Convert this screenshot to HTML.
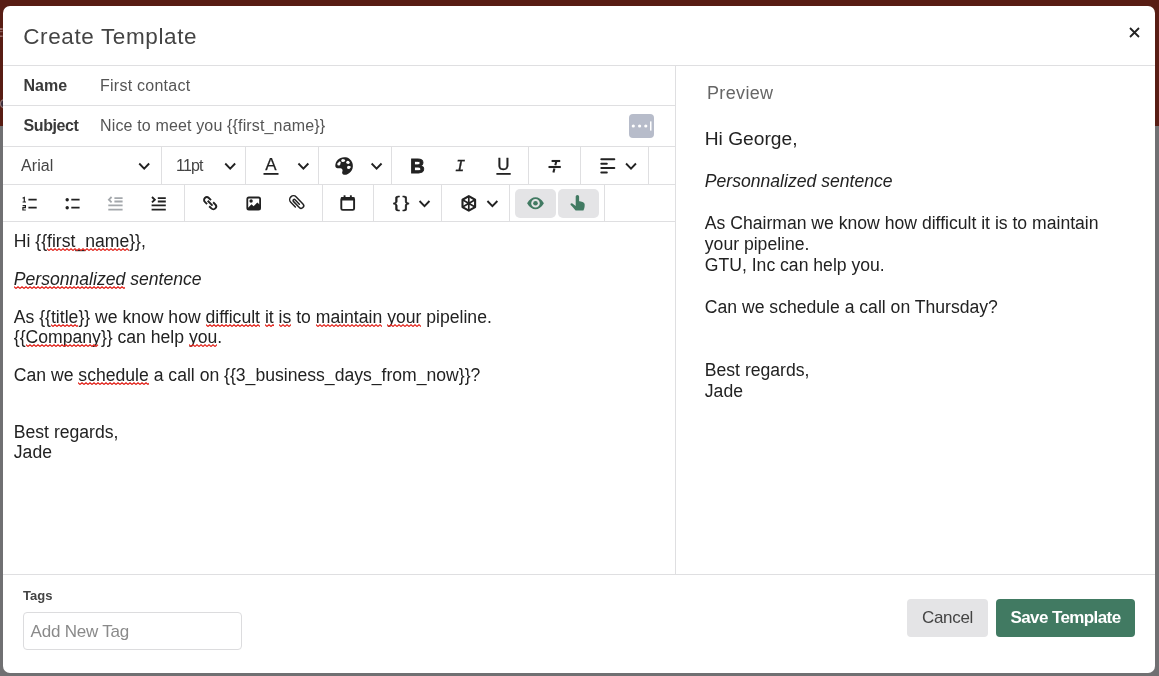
<!DOCTYPE html>
<html lang="en">
<head>
<meta charset="utf-8">
<title>Create Template</title>
<style>
*{box-sizing:border-box;margin:0;padding:0}
html,body{width:1159px;height:676px;overflow:hidden}
body{position:relative;background:#707072;font-family:"Liberation Sans",sans-serif;color:#444}
.bgtop{position:absolute;left:0;top:0;width:1159px;height:126px;background:#581d14}
.modal{will-change:transform;position:absolute;left:3px;top:6px;width:1152px;height:667px;background:#fff;border-radius:7px;overflow:hidden}
.abs{position:absolute;white-space:nowrap}
.hl{position:absolute;height:1px;background:#dfdfe1}
.vl{position:absolute;width:1px;background:#dfdfe1}
.title{left:20.2px;top:16.900px;font-size:22.5px;line-height:28px;color:#444;letter-spacing:0.62px}
.lbl{font-size:16px;font-weight:bold;color:#3a3a3a;line-height:20px}
.val{font-size:16px;color:#555;line-height:20px}
.ed{font-size:17.6px;line-height:20px;color:#222}
.ed i{font-style:italic}
.sp{position:relative;display:inline-block;line-height:inherit}
.sp svg{position:absolute;left:0;bottom:0.5px;width:100%;height:3px;overflow:hidden}
.pv{font-size:17.6px;line-height:21px;color:#222}
.tb{position:absolute;left:-3px;top:-6px;width:1159px;height:676px}
.tbt{font-size:16px;line-height:22px;color:#444}
.btn{position:absolute;height:37.5px;border-radius:4px;font-size:17px;line-height:37px;text-align:center}
</style>
</head>
<body>
<div class="bgtop"></div>
<svg style="position:absolute;left:0;top:0" width="4" height="130" viewBox="0 0 4 130"><rect x="0" y="28" width="2.6" height="2" fill="#9a6c69"/><rect x="0" y="31" width="2.6" height="1.2" fill="#8d5f5c"/><rect x="0" y="35.500" width="2.600" height="1.5" fill="#9a6c69"/><path d="M3.400,99.500 A4.500,4.500 0 0 0 3.400,108" fill="#3a2c3a" stroke="#8d7070" stroke-width="1.1"/></svg>
<div class="modal">
  <!-- header -->
  <div class="abs title">Create Template</div>
  <svg class="abs" style="left:1126px;top:21px" width="11" height="11" viewBox="0 0 11 11"><path d="M1 1 L10 10 M10 1 L1 10" stroke="#222" stroke-width="1.8" fill="none"/></svg>
  <div class="hl" style="left:0;top:59px;width:1152px"></div>

  <!-- left: name / subject -->
  <div class="abs lbl" style="left:20.5px;top:70px">Name</div>
  <div class="abs val" style="left:97px;top:70px;letter-spacing:0.25px">First contact</div>
  <div class="hl" style="left:0;top:99px;width:672px"></div>
  <div class="abs lbl" style="left:20.5px;top:110.3px;letter-spacing:-0.4px">Subject</div>
  <div class="abs val" style="left:97px;top:110px;letter-spacing:0.15px">Nice to meet you {{first_name}}</div>
  <div class="abs" style="left:626px;top:108px;width:25px;height:24px;border-radius:4px;background:#b7bcca"></div>
  <svg class="abs" style="left:626px;top:108px" width="25" height="24" viewBox="629 114 25 24"><circle cx="633.3" cy="126" r="1.6" fill="#fff"/><circle cx="639.6" cy="126" r="1.600" fill="#fff"/><circle cx="645.800" cy="126" r="1.6" fill="#fff"/><rect x="650" y="121.400" width="1.5" height="9.2" fill="#fff"/></svg>
  <div class="hl" style="left:0;top:140px;width:672px"></div>

  <!-- toolbar rows -->
  <div class="hl" style="left:0;top:178px;width:672px"></div>
  <div class="hl" style="left:0;top:215px;width:672px"></div>
  <div class="tb">
    <!-- row 1 dividers -->
    <div class="vl" style="left:161px;top:147px;height:37px"></div>
    <div class="vl" style="left:245px;top:147px;height:37px"></div>
    <div class="vl" style="left:318px;top:147px;height:37px"></div>
    <div class="vl" style="left:391px;top:147px;height:37px"></div>
    <div class="vl" style="left:528px;top:147px;height:37px"></div>
    <div class="vl" style="left:580px;top:147px;height:37px"></div>
    <div class="vl" style="left:648px;top:147px;height:37px"></div>
    <!-- row 2 dividers -->
    <div class="vl" style="left:184px;top:185px;height:36px"></div>
    <div class="vl" style="left:322px;top:185px;height:36px"></div>
    <div class="vl" style="left:373px;top:185px;height:36px"></div>
    <div class="vl" style="left:441px;top:185px;height:36px"></div>
    <div class="vl" style="left:509px;top:185px;height:36px"></div>
    <div class="vl" style="left:604px;top:185px;height:36px"></div>
    <!-- active buttons -->
    <div class="abs" style="left:515px;top:189px;width:41px;height:29px;border-radius:5px;background:#e4e4e6"></div>
    <div class="abs" style="left:558px;top:189px;width:41px;height:29px;border-radius:5px;background:#e4e4e6"></div>
    <!-- text items -->
    <div class="abs tbt" style="left:21px;top:154.500px;letter-spacing:0.1px">Arial</div>
    <div class="abs tbt" style="left:176px;top:154.5px;letter-spacing:-0.8px">11pt</div>
    <div class="abs" style="left:263.5px;top:154.400px;width:15px;text-align:center;font-size:17px;line-height:22px;color:#222;-webkit-text-stroke:0.25px #222">A</div>
    <div class="abs" style="left:407px;top:154.900px;width:21px;text-align:center;font-size:20px;line-height:22px;color:#222;font-weight:bold;-webkit-text-stroke:0.9px #222">B</div>
    <div class="abs" style="left:449.5px;top:156.2px;width:21px;text-align:center;font-family:'Liberation Mono',monospace;font-style:italic;font-size:17px;line-height:22px;color:#222;-webkit-text-stroke:0.3px #222">I</div>
    <div class="abs" style="left:493px;top:154.400px;width:21px;text-align:center;font-size:17px;line-height:22px;color:#222;-webkit-text-stroke:0.3px #222">U</div>
    <div class="abs" style="left:392.5px;top:191.8px;font-size:17px;line-height:22px;color:#222;letter-spacing:2.2px;-webkit-text-stroke:0.4px #222;transform:scaleX(1.2);transform-origin:0 0">{}</div>
    <svg class="abs" style="left:3px;top:147px" width="672" height="75" viewBox="3 147 672 75">
            <path transform="translate(144.2 166.8)" d="M-4.3,-2.6 L0,1.9 L4.3,-2.6" fill="none" stroke="#222" stroke-width="1.9" stroke-linecap="square"/>
      <path transform="translate(230.2 166.8)" d="M-4.3,-2.6 L0,1.9 L4.3,-2.6" fill="none" stroke="#222" stroke-width="1.9" stroke-linecap="square"/>
      <path transform="translate(303.4 166.8)" d="M-4.3,-2.6 L0,1.9 L4.3,-2.6" fill="none" stroke="#222" stroke-width="1.9" stroke-linecap="square"/>
      <path transform="translate(376.6 166.8)" d="M-4.3,-2.6 L0,1.9 L4.3,-2.6" fill="none" stroke="#222" stroke-width="1.9" stroke-linecap="square"/>
      <path transform="translate(631 166.8)" d="M-4.3,-2.6 L0,1.9 L4.3,-2.6" fill="none" stroke="#222" stroke-width="1.9" stroke-linecap="square"/>
      <path transform="translate(424.5 204.3)" d="M-4.3,-2.6 L0,1.9 L4.3,-2.6" fill="none" stroke="#222" stroke-width="1.9" stroke-linecap="square"/>
      <path transform="translate(492.4 204.3)" d="M-4.3,-2.6 L0,1.9 L4.3,-2.6" fill="none" stroke="#222" stroke-width="1.9" stroke-linecap="square"/>
      <!-- A underline, U underline -->
      <rect x="263.5" y="173" width="15" height="1.8" fill="#222"/>
      <rect x="496.4" y="173" width="14.3" height="1.8" fill="#222"/>
      <!-- palette -->
      <g transform="translate(352.9 157.2) scale(-0.0344 0.0344)"><path fill="#222" d="M204.3 5C104.9 24.4 24.800 104.300 5.200 203.400c-37 187 131.700 326.400 258.800 306.700 41.200-6.400 61.400-54.600 42.500-91.700-23.100-45.400 9.900-98.400 60.900-98.400h79.700c35.800 0 64.800-29.600 64.900-65.300C511.500 97.100 368.100-26.900 204.300 5zM96 320c-17.700 0-32-14.300-32-32s14.300-32 32-32 32 14.300 32 32-14.300 32-32 32zm32-128c-17.700 0-32-14.300-32-32s14.300-32 32-32 32 14.300 32 32-14.300 32-32 32zm128-64c-17.700 0-32-14.300-32-32s14.300-32 32-32 32 14.300 32 32-14.300 32-32 32zm128 64c-17.700 0-32-14.300-32-32s14.300-32 32-32 32 14.300 32 32-14.300 32-32 32z"/></g>
      <g fill="#fff"><circle cx="338.8" cy="164" r="1.55"/><circle cx="342.8" cy="160.5" r="1.55"/><circle cx="347.8" cy="162.300" r="1.55"/><circle cx="348.600" cy="167.400" r="1.55"/></g>
      <!-- strikethrough -->
      <g stroke="#222" stroke-width="2.1" fill="none"><path d="M551.6,161 H560.2"/><path d="M548.5,167 H560.8"/><path d="M556.4,161 L555.3,165.2"/><path d="M554.4,168.6 L553.4,172.4"/></g>
      <!-- align -->
      <g stroke="#222" stroke-width="2" fill="none" stroke-linecap="round"><path d="M601.3,159.3 H614.3"/><path d="M601.3,163.7 H606.8"/><path d="M601.3,168.1 H614.3"/><path d="M601.3,172.5 H606.8"/></g>
      <!-- numlist -->
      <g stroke="#222" stroke-width="1.7" fill="none"><path d="M28.4,199.7 H36.7"/><path d="M28.4,207.7 H36.7"/></g>
      <g stroke="#222" stroke-width="1.2" fill="none"><path d="M22.6,198.3 L24.3,197.4 V202"/><path d="M22.6,202 H26"/><path d="M22.6,205.6 H25.4 V207.7 H22.9 V210 H25.8"/></g>
      <!-- bullist -->
      <g stroke="#222" stroke-width="1.7" fill="none"><path d="M71.3,199.7 H79.6"/><path d="M71.3,207.7 H79.6"/></g>
      <circle cx="67.2" cy="199.7" r="1.7" fill="#222"/><circle cx="67.2" cy="207.7" r="1.7" fill="#222"/>
      <!-- outdent -->
      <g stroke="#a3a7ab" stroke-width="1.8" fill="none"><path d="M114.4,198.1 H122.6"/><path d="M114.4,201.5 H122.6"/><path d="M108.3,205.4 H122.6"/><path d="M108.3,209.6 H122.6"/><path d="M111.6,197 L108.9,199.7 L111.6,202.4"/></g>
      <!-- indent -->
      <g stroke="#222" stroke-width="1.9" fill="none"><path d="M157.8,198.1 H165.8"/><path d="M157.8,201.5 H165.8"/><path d="M151.6,205.4 H165.8"/><path d="M151.6,209.6 H165.8"/><path d="M152,197 L154.8,199.7 L152,202.4"/></g>
      <!-- link -->
      <g transform="translate(210.1 203.2) rotate(45)" stroke="#222" stroke-width="1.9" fill="none"><path d="M-1.5,-2.8 H-4.6 A2.8,2.8 0 0 0 -4.600,2.800 H-1.5"/><path d="M1.5,-2.800 H4.6 A2.8,2.8 0 0 1 4.600,2.800 H1.5"/><path d="M-3.4,0 H3.400"/></g>
      <!-- image -->
      <rect x="247.3" y="197.5" width="12.8" height="12.2" rx="1.6" fill="none" stroke="#222" stroke-width="1.8"/>
      <path d="M247.3,208.5 L251.5,204.3 L253.6,206.2 L257.3,202.4 L260.1,205 V209.7 H247.3 Z" fill="#222"/>
      <circle cx="251.1" cy="201" r="1.7" fill="#222"/>
      <!-- paperclip -->
      <g transform="translate(293.5 199.6) rotate(46)" stroke="#222" stroke-width="1.5" fill="none" stroke-linecap="round"><path d="M6.6,3.8 L0,3.8 A3.8,3.8 0 0 1 0,-3.8 L9.7,-3.8 A2.55,2.55 0 0 1 9.7,1.3 L1.2,1.3 A1.15,1.15 0 0 1 1.2,-1 L7.4,-1"/></g>
      <!-- calendar -->
      <rect x="341.3" y="198" width="12.8" height="11.9" rx="1.4" fill="none" stroke="#222" stroke-width="1.9"/>
      <rect x="341" y="197.2" width="13.4" height="3.3" fill="#222"/>
      <rect x="343.6" y="195.3" width="1.9" height="3" fill="#222"/><rect x="349.9" y="195.3" width="1.9" height="3" fill="#222"/>
      <!-- cube -->
      <g stroke="#222" fill="none" stroke-linejoin="round"><path stroke-width="2.1" d="M468.8,196.1 L475.100,199.750 V207.050 L468.8,210.700 L462.5,207.050 V199.750 Z"/><path stroke-width="1.7" d="M468.8,196.1 V210.7 M462.5,199.750 L475.100,207.050 M475.100,199.750 L462.500,207.050"/></g>
      <!-- eye -->
      <path fill="#417a62" fill-rule="evenodd" d="M527.1,203.200 C529.5,199 532.500,197.200 535.5,197.200 C538.5,197.200 541.5,199 543.900,203.200 C541.5,207.400 538.5,209.300 535.5,209.300 C532.5,209.300 529.500,207.400 527.100,203.200 Z M535.5,198.900 A4.3,4.3 0 1 0 535.5,207.500 A4.3,4.3 0 1 0 535.5,198.900 Z"/>
      <circle cx="535.5" cy="203.200" r="2.300" fill="#417a62"/>
      <!-- pointer -->
      <path fill="#417a62" d="M575.700,196.600 A1.700,1.700 0 0 1 579.100,196.600 V201.300 C581,201.300 584.700,202.200 584.700,204.800 C584.700,207.300 584.200,209 583.400,210.600 H575.600 C574.400,208.600 572.300,206.600 570.700,204.900 C569.900,204 571.300,202.700 572.400,203.500 L575.700,205.900 Z"/>
    </svg>
  </div>

  <!-- vertical split -->
  <div class="vl" style="left:672px;top:60px;height:508px"></div>

  <!-- editor -->
  <div class="abs ed" style="left:10.8px;top:225px">Hi {{<span class="sp">first_name<svg><path d="M-2,2.5 L0,0.7 L2,2.5 L4,0.7 L6,2.5 L8,0.7 L10,2.5 L12,0.7 L14,2.5 L16,0.7 L18,2.5 L20,0.7 L22,2.5 L24,0.7 L26,2.5 L28,0.7 L30,2.5 L32,0.7 L34,2.5 L36,0.7 L38,2.5 L40,0.7 L42,2.5 L44,0.7 L46,2.5 L48,0.7 L50,2.5 L52,0.7 L54,2.5 L56,0.7 L58,2.5 L60,0.7 L62,2.5 L64,0.7 L66,2.5 L68,0.7 L70,2.5 L72,0.7 L74,2.5 L76,0.7 L78,2.5 L80,0.7 L82,2.5 L84,0.7 L86,2.5 L88,0.7 L90,2.5 L92,0.7 L94,2.5 L96,0.7 L98,2.5 L100,0.7 L102,2.5" fill="none" stroke="#e32a22" stroke-width="1.15"/></svg></span>}},</div>
  <div class="abs ed" style="left:10.8px;top:263px"><i><span class="sp">Personnalized<svg><path d="M-2,2.5 L0,0.7 L2,2.5 L4,0.7 L6,2.5 L8,0.7 L10,2.5 L12,0.7 L14,2.5 L16,0.7 L18,2.5 L20,0.7 L22,2.5 L24,0.7 L26,2.5 L28,0.7 L30,2.5 L32,0.7 L34,2.5 L36,0.7 L38,2.5 L40,0.7 L42,2.5 L44,0.7 L46,2.5 L48,0.7 L50,2.5 L52,0.7 L54,2.5 L56,0.7 L58,2.5 L60,0.7 L62,2.5 L64,0.7 L66,2.5 L68,0.7 L70,2.5 L72,0.7 L74,2.5 L76,0.7 L78,2.5 L80,0.7 L82,2.5 L84,0.7 L86,2.5 L88,0.7 L90,2.5 L92,0.7 L94,2.5 L96,0.7 L98,2.5 L100,0.7 L102,2.5 L104,0.7 L106,2.5 L108,0.7 L110,2.5 L112,0.7 L114,2.5 L116,0.7 L118,2.5 L120,0.7 L122,2.5 L124,0.7 L126,2.5 L128,0.7 L130,2.5 L132,0.7" fill="none" stroke="#e32a22" stroke-width="1.15"/></svg></span> sentence</i></div>
  <div class="abs ed" style="left:10.8px;top:301px">As {{<span class="sp">title<svg><path d="M-2,2.5 L0,0.7 L2,2.5 L4,0.7 L6,2.5 L8,0.7 L10,2.5 L12,0.7 L14,2.5 L16,0.7 L18,2.5 L20,0.7 L22,2.5 L24,0.7 L26,2.5 L28,0.7 L30,2.5 L32,0.7 L34,2.5 L36,0.7 L38,2.5 L40,0.7 L42,2.5 L44,0.7 L46,2.5 L48,0.7 L50,2.5 L52,0.7" fill="none" stroke="#e32a22" stroke-width="1.15"/></svg></span>}} we know how <span class="sp">difficult<svg><path d="M-2,2.5 L0,0.7 L2,2.5 L4,0.7 L6,2.5 L8,0.7 L10,2.5 L12,0.7 L14,2.5 L16,0.7 L18,2.5 L20,0.7 L22,2.5 L24,0.7 L26,2.5 L28,0.7 L30,2.5 L32,0.7 L34,2.5 L36,0.7 L38,2.5 L40,0.7 L42,2.5 L44,0.7 L46,2.5 L48,0.7 L50,2.5 L52,0.7 L54,2.5 L56,0.7 L58,2.5 L60,0.7 L62,2.5 L64,0.7 L66,2.5 L68,0.7 L70,2.5 L72,0.7 L74,2.5 L76,0.7 L78,2.5 L80,0.7 L82,2.5 L84,0.7 L86,2.5 L88,0.7 L90,2.5 L92,0.7" fill="none" stroke="#e32a22" stroke-width="1.15"/></svg></span> <span class="sp">it<svg><path d="M-2,2.5 L0,0.7 L2,2.5 L4,0.7 L6,2.5 L8,0.7 L10,2.5 L12,0.7 L14,2.5 L16,0.7 L18,2.5 L20,0.7 L22,2.5" fill="none" stroke="#e32a22" stroke-width="1.15"/></svg></span> <span class="sp">is<svg><path d="M-2,2.5 L0,0.7 L2,2.5 L4,0.7 L6,2.5 L8,0.7 L10,2.5 L12,0.7 L14,2.5 L16,0.7 L18,2.5 L20,0.7 L22,2.5" fill="none" stroke="#e32a22" stroke-width="1.15"/></svg></span> to <span class="sp">maintain<svg><path d="M-2,2.5 L0,0.7 L2,2.5 L4,0.7 L6,2.5 L8,0.7 L10,2.5 L12,0.7 L14,2.5 L16,0.7 L18,2.5 L20,0.7 L22,2.5 L24,0.7 L26,2.5 L28,0.7 L30,2.5 L32,0.7 L34,2.5 L36,0.7 L38,2.5 L40,0.7 L42,2.5 L44,0.7 L46,2.5 L48,0.7 L50,2.5 L52,0.7 L54,2.5 L56,0.7 L58,2.5 L60,0.7 L62,2.5 L64,0.7 L66,2.5 L68,0.7 L70,2.5 L72,0.7 L74,2.5 L76,0.7 L78,2.5 L80,0.7 L82,2.5" fill="none" stroke="#e32a22" stroke-width="1.15"/></svg></span> <span class="sp">your<svg><path d="M-2,2.5 L0,0.7 L2,2.5 L4,0.7 L6,2.5 L8,0.7 L10,2.5 L12,0.7 L14,2.5 L16,0.7 L18,2.5 L20,0.7 L22,2.5 L24,0.7 L26,2.5 L28,0.7 L30,2.5 L32,0.7 L34,2.5 L36,0.7 L38,2.5 L40,0.7 L42,2.5" fill="none" stroke="#e32a22" stroke-width="1.15"/></svg></span> pipeline.</div>
  <div class="abs ed" style="left:10.8px;top:321px">{{<span class="sp">Company<svg><path d="M-2,2.5 L0,0.7 L2,2.5 L4,0.7 L6,2.5 L8,0.7 L10,2.5 L12,0.7 L14,2.5 L16,0.7 L18,2.5 L20,0.7 L22,2.5 L24,0.7 L26,2.5 L28,0.7 L30,2.5 L32,0.7 L34,2.5 L36,0.7 L38,2.5 L40,0.7 L42,2.5 L44,0.7 L46,2.5 L48,0.7 L50,2.5 L52,0.7 L54,2.5 L56,0.7 L58,2.5 L60,0.7 L62,2.5 L64,0.7 L66,2.5 L68,0.7 L70,2.5 L72,0.7" fill="none" stroke="#e32a22" stroke-width="1.15"/></svg></span>}} can help <span class="sp">you<svg><path d="M-2,2.5 L0,0.7 L2,2.5 L4,0.7 L6,2.5 L8,0.7 L10,2.5 L12,0.7 L14,2.5 L16,0.7 L18,2.5 L20,0.7 L22,2.5 L24,0.7 L26,2.5 L28,0.7 L30,2.5 L32,0.7" fill="none" stroke="#e32a22" stroke-width="1.15"/></svg></span>.</div>
  <div class="abs ed" style="left:10.8px;top:359px">Can we <span class="sp">schedule<svg><path d="M-2,2.5 L0,0.7 L2,2.5 L4,0.7 L6,2.5 L8,0.7 L10,2.5 L12,0.7 L14,2.5 L16,0.7 L18,2.5 L20,0.7 L22,2.5 L24,0.7 L26,2.5 L28,0.7 L30,2.5 L32,0.7 L34,2.5 L36,0.7 L38,2.5 L40,0.7 L42,2.5 L44,0.7 L46,2.5 L48,0.7 L50,2.5 L52,0.7 L54,2.5 L56,0.7 L58,2.5 L60,0.7 L62,2.5 L64,0.7 L66,2.5 L68,0.7 L70,2.5 L72,0.7 L74,2.5 L76,0.7 L78,2.5 L80,0.7 L82,2.5" fill="none" stroke="#e32a22" stroke-width="1.15"/></svg></span> a call on {{3_business_days_from_now}}?</div>
  <div class="abs ed" style="left:10.8px;top:416px">Best regards,</div>
  <div class="abs ed" style="left:10.8px;top:436px">Jade</div>

  <!-- preview -->
  <div class="abs" style="left:704px;top:76px;font-size:18px;line-height:22px;color:#666;letter-spacing:0.35px">Preview</div>
  <div class="abs pv" style="left:701.7px;top:122px;font-size:19.2px;line-height:22px">Hi George,</div>
  <div class="abs pv" style="left:701.8px;top:165px"><i>Personnalized sentence</i></div>
  <div class="abs pv" style="left:701.8px;top:207px">As Chairman we know how difficult it is to maintain</div>
  <div class="abs pv" style="left:701.8px;top:228px">your pipeline.</div>
  <div class="abs pv" style="left:701.8px;top:249px">GTU, Inc can help you.</div>
  <div class="abs pv" style="left:701.8px;top:291px">Can we schedule a call on Thursday?</div>
  <div class="abs pv" style="left:701.8px;top:354px">Best regards,</div>
  <div class="abs pv" style="left:701.8px;top:375px">Jade</div>

  <!-- footer -->
  <div class="hl" style="left:0;top:568px;width:1152px"></div>
  <div class="abs" style="left:20px;top:581.700px;font-size:13px;font-weight:bold;color:#444;line-height:16px">Tags</div>
  <div class="abs" style="left:20px;top:606px;width:219px;height:38px;border:1px solid #dcdcde;border-radius:4px"></div>
  <div class="abs" style="left:27.5px;top:616px;font-size:17px;line-height:20px;color:#8a8a8a;letter-spacing:-0.2px">Add New Tag</div>
  <div class="btn" style="left:904px;top:593.2px;width:81px;background:#e4e4e6;color:#444;letter-spacing:-0.3px">Cancel</div>
  <div class="btn" style="left:993px;top:593.2px;width:139px;background:#417a62;color:#fff;font-weight:bold;letter-spacing:-0.6px">Save Template</div>
</div>
</body>
</html>
